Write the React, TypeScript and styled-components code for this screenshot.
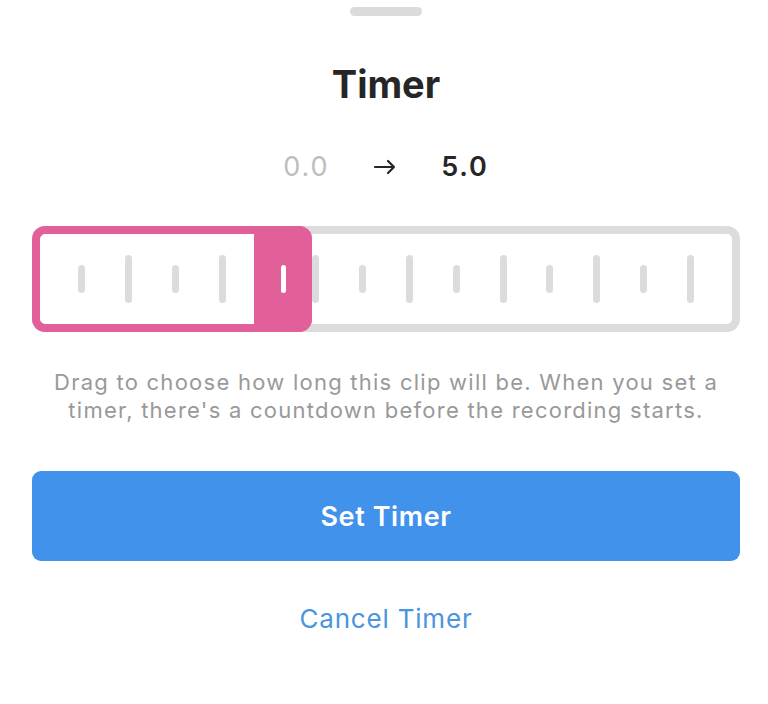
import React from "react";
import styled, { createGlobalStyle } from "styled-components";

const GlobalStyle = createGlobalStyle`
  html, body { margin: 0; padding: 0; background: #ffffff; }
  body { font-family: Inter, "Liberation Sans", sans-serif; -webkit-font-smoothing: antialiased; }
`;

const Sheet = styled.div`
  width: 768px;
  height: 704px;
  box-sizing: border-box;
  padding: 7px 28px 0 32px;
  display: flex;
  flex-direction: column;
  align-items: center;
  background: #fff;
`;

const Grabber = styled.div`
  width: 72px;
  height: 9px;
  border-radius: 5px;
  background: #dbdbdb;
`;

const Title = styled.h1`
  margin: 45px 0 0;
  font-size: 38px;
  line-height: 46px;
  font-weight: 700;
  color: #262626;
`;

const ValueRow = styled.div`
  margin-top: 44px;
  display: flex;
  align-items: center;
  gap: 44px;
  height: 32px;
`;

const Value = styled.span<{ $active?: boolean }>`
  font-size: 27px;
  line-height: 32px;
  font-weight: ${(p) => (p.$active ? 600 : 400)};
  color: ${(p) => (p.$active ? "#262626" : "#bdbdbd")};
  letter-spacing: 1.8px;
`;

const Arrow = styled.svg`
  width: 24px;
  height: 16px;
  display: block;
`;

const Track = styled.div`
  position: relative;
  margin-top: 43px;
  width: 708px;
  height: 106px;
  box-sizing: border-box;
  border: 8px solid #dcdcdc;
  border-radius: 13px;
  padding: 0 38px 0 38px;
  display: flex;
  align-items: center;
  justify-content: space-between;
`;

const Tick = styled.div<{ $long?: boolean }>`
  width: 7px;
  height: ${(p) => (p.$long ? 48 : 28)}px;
  border-radius: 4px;
  background: #dcdcdc;
`;

const Selection = styled.div`
  position: absolute;
  left: -8px;
  top: -8px;
  bottom: -8px;
  width: 280px;
  box-sizing: border-box;
  border: 8px solid #e2609a;
  border-right: none;
  border-radius: 13px;
  display: flex;
  justify-content: flex-end;
  align-items: stretch;
`;

const Handle = styled.div`
  width: 58px;
  margin: -8px 0;
  background: #e2609a;
  border-radius: 0 13px 13px 0;
  display: flex;
  align-items: center;
  justify-content: center;
`;

const Grip = styled.div`
  width: 5px;
  height: 28px;
  border-radius: 3px;
  background: #ffffff;
`;

const Description = styled.p`
  margin: 36px 0 0;
  width: 700px;
  text-align: center;
  font-size: 22px;
  line-height: 28px;
  letter-spacing: 1.25px;
  color: #999999;
`;

const PrimaryButton = styled.button`
  margin-top: 47px;
  width: 708px;
  height: 90px;
  border: none;
  border-radius: 9px;
  background: #4192ea;
  color: #ffffff;
  font-family: inherit;
  font-size: 27px;
  font-weight: 600;
  letter-spacing: 0.6px;
  cursor: pointer;
`;

const LinkButton = styled.button`
  margin-top: 42px;
  border: none;
  background: none;
  padding: 0;
  font-family: inherit;
  font-size: 26px;
  line-height: 32px;
  font-weight: 400;
  letter-spacing: 0.8px;
  color: #4a95dd;
  cursor: pointer;
`;

const ticks = Array.from({ length: 14 }, (_, i) => i % 2 === 1);

export default function App() {
  return (
    <>
      <GlobalStyle />
      <Sheet>
        <Grabber />
        <Title>Timer</Title>
        <ValueRow>
          <Value>0.0</Value>
          <Arrow viewBox="0 0 24 16" fill="none" stroke="#262626" strokeWidth="2.2" strokeLinecap="round" strokeLinejoin="round">
            <path d="M2 8h19M15 2l6 6-6 6" />
          </Arrow>
          <Value $active>5.0</Value>
        </ValueRow>
        <Track>
          {ticks.map((long, i) => (
            <Tick key={i} $long={long} />
          ))}
          <Selection>
            <Handle>
              <Grip />
            </Handle>
          </Selection>
        </Track>
        <Description>
          Drag to choose how long this clip will be. When you set a timer, there's a countdown before the recording starts.
        </Description>
        <PrimaryButton>Set Timer</PrimaryButton>
        <LinkButton>Cancel Timer</LinkButton>
      </Sheet>
    </>
  );
}
